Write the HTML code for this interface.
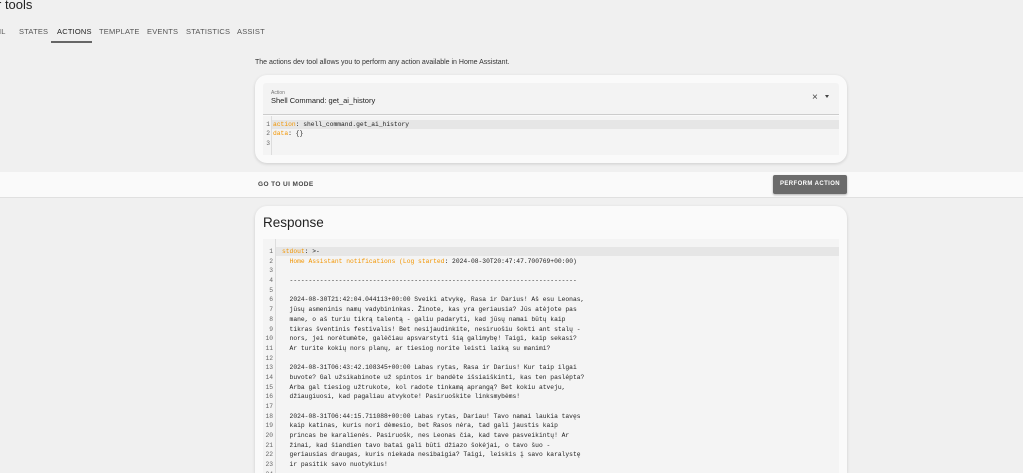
<!DOCTYPE html>
<html style="height:473px;overflow:hidden"><head><meta charset="utf-8"><style>
*{box-sizing:border-box;margin:0;padding:0}
body{width:1023px;height:473px;overflow:hidden;background:#f0f0f0;font-family:"Liberation Sans",sans-serif;color:#212121;position:relative}
.abs{position:absolute}
.tab{position:absolute;top:27px;font-size:7.5px;color:#555;letter-spacing:.2px}
.card{position:absolute;left:255px;width:592px;background:#fafafa;border-radius:12px;box-shadow:0 1px 3px rgba(0,0,0,.15);overflow:hidden}
.code{position:absolute;background:#f4f4f4;font-family:"Liberation Mono",monospace;font-size:6.3px;color:#222;overflow:hidden}
.gut{position:absolute;left:0;top:0;bottom:0;width:13px;border-right:1px solid #ddd}
.ln{position:absolute;left:0;width:12px;text-align:right;padding-right:2px;color:#666;white-space:pre}
.tx{position:absolute;left:19px;white-space:pre}
.k{color:#f29500}
</style></head><body>
<div class="abs" style="left:-3px;top:-3px;font-size:13px;color:#222">r tools</div>
<div class="tab" style="left:-1px">IL</div>
<div class="tab" style="left:19px">STATES</div>
<div class="tab" style="left:57px;color:#222">ACTIONS</div>
<div class="abs" style="left:51px;top:41px;width:41px;height:2px;background:#666"></div>
<div class="tab" style="left:99px">TEMPLATE</div>
<div class="tab" style="left:147px">EVENTS</div>
<div class="tab" style="left:186px">STATISTICS</div>
<div class="tab" style="left:237px">ASSIST</div>
<div class="abs" style="left:255px;top:59px;font-size:7px;color:#333">The actions dev tool allows you to perform any action available in Home Assistant.</div>

<div class="card" style="top:75px;height:88px">
  <div class="abs" style="left:8px;top:8px;width:576px;height:32px;background:#f3f3f3;border-bottom:1px solid #ccc;border-radius:3px 3px 0 0"></div>
  <div class="abs" style="left:16px;top:15px;font-size:5px;color:#777">Action</div>
  <div class="abs" style="left:16px;top:21px;font-size:7.5px;color:#222">Shell Command: get_ai_history</div>
  <div class="abs" style="left:557px;top:17px;font-size:10px;color:#444">×</div>
  <div class="abs" style="left:570px;top:20px;width:0;height:0;border-left:2.5px solid transparent;border-right:2.5px solid transparent;border-top:3px solid #444"></div>
  <div class="code" style="left:8px;top:41px;width:576px;height:39px">
    <div class="gut" style="width:9px"></div>
    <div class="abs" style="left:9px;top:4px;right:0;height:9px;background:#e6e6e6"></div>
    <div class="ln" style="top:5px;width:8px;padding-right:1px">1</div><div class="tx" style="top:5px;left:10px"><span class="k">action</span>: shell_command.get_ai_history</div>
    <div class="ln" style="top:14px;width:8px;padding-right:1px">2</div><div class="tx" style="top:14px;left:10px"><span class="k">data</span>: {}</div>
    <div class="ln" style="top:24px;width:8px;padding-right:1px">3</div>
  </div>
</div>

<div class="abs" style="left:0;top:172px;width:1023px;height:26px;background:#fafafa;border-bottom:1px solid #e0e0e0"></div>
<div class="abs" style="left:258px;top:181px;font-size:6.5px;font-weight:bold;color:#444;letter-spacing:.4px">GO TO UI MODE</div>
<div class="abs" style="left:773px;top:175px;width:74px;height:19px;background:#6b6b6b;border-radius:2px;box-shadow:0 1px 2px rgba(0,0,0,.3);color:#fff;font-size:6px;font-weight:bold;letter-spacing:.4px;text-align:center;line-height:19px">PERFORM ACTION</div>

<div class="card" style="top:206px;height:267px;border-radius:12px 12px 0 0">
  <div class="abs" style="left:8px;top:9px;font-size:13.5px;color:#222">Response</div>
  <div class="code" style="left:8px;top:33px;width:576px;height:234px">
    <div class="gut"></div>
    <div class="abs" style="left:13px;top:8px;right:0;height:9px;background:#e6e6e6"></div>
    <div style="position:absolute;top:8px;left:0;right:0;line-height:9.68px">
<div class="ln" style="position:static;float:left;clear:left">1<br>2<br>3<br>4<br>5<br>6<br>7<br>8<br>9<br>10<br>11<br>12<br>13<br>14<br>15<br>16<br>17<br>18<br>19<br>20<br>21<br>22<br>23<br>24</div>
<div class="tx" style="top:0"><span class="k">stdout</span>: >-
  <span class="k">Home Assistant notifications (Log started</span>: 2024-08-30T20:47:47.700769+00:00)

  ----------------------------------------------------------------------------

  2024-08-30T21:42:04.044113+00:00 Sveiki atvykę, Rasa ir Darius! Aš esu Leonas,
  jūsų asmeninis namų vadybininkas. Žinote, kas yra geriausia? Jūs atėjote pas
  mane, o aš turiu tikrą talentą - galiu padaryti, kad jūsų namai būtų kaip
  tikras šventinis festivalis! Bet nesijaudinkite, nesiruošiu šokti ant stalų -
  nors, jei norėtumėte, galėčiau apsvarstyti šią galimybę! Taigi, kaip sekasi?
  Ar turite kokių nors planų, ar tiesiog norite leisti laiką su manimi?

  2024-08-31T06:43:42.108345+00:00 Labas rytas, Rasa ir Darius! Kur taip ilgai
  buvote? Gal užsikabinote už spintos ir bandėte išsiaiškinti, kas ten paslėpta?
  Arba gal tiesiog užtrukote, kol radote tinkamą aprangą? Bet kokiu atveju,
  džiaugiuosi, kad pagaliau atvykote! Pasiruoškite linksmybėms!

  2024-08-31T06:44:15.711088+00:00 Labas rytas, Dariau! Tavo namai laukia tavęs
  kaip katinas, kuris nori dėmesio, bet Rasos nėra, tad gali jaustis kaip
  princas be karalienės. Pasiruošk, nes Leonas čia, kad tave pasveikintų! Ar
  žinai, kad šiandien tavo batai gali būti džiazo šokėjai, o tavo šuo -
  geriausias draugas, kuris niekada nesibaigia? Taigi, leiskis į savo karalystę
  ir pasitik savo nuotykius!
</div>
    </div>
  </div>
</div>
</body></html>
